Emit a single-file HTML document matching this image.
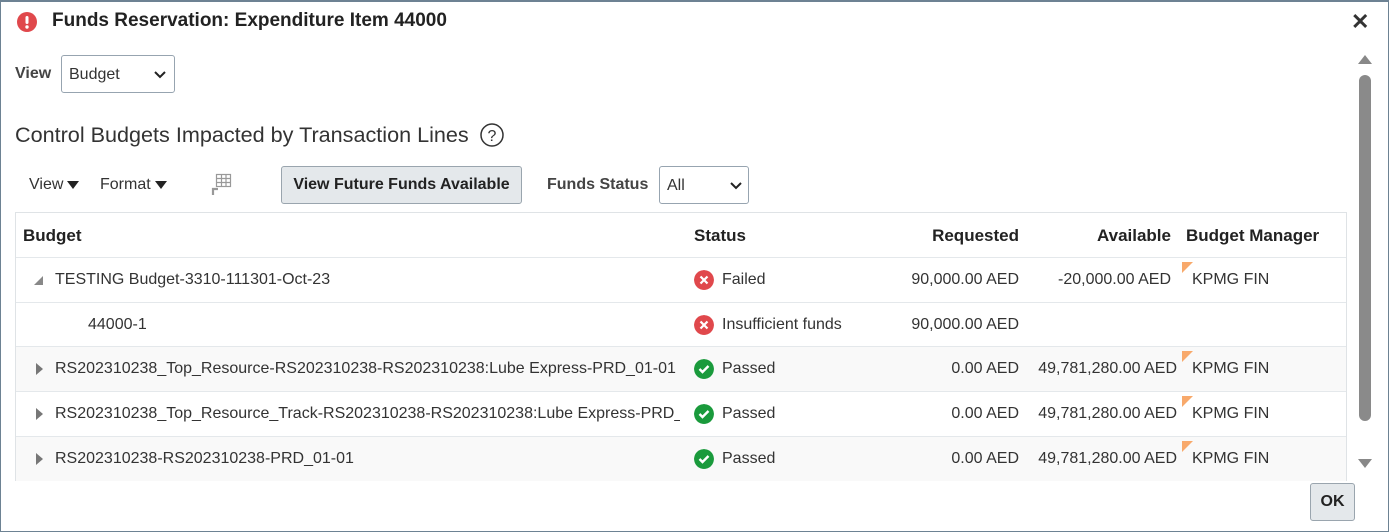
<!DOCTYPE html><html><head><style>
body{margin:0;width:1389px;height:531px;overflow:hidden;font-family:"Liberation Sans",sans-serif;color:#222;background:#fff;position:relative}
.a{position:absolute;white-space:nowrap}
.frame{position:absolute;left:0;top:0;width:1387px;height:529px;border:1px solid #6d8293;border-top:2px solid #6d8293}
.sel{position:absolute;border:1px solid #97a4b0;border-radius:3px;background:#fff;font-size:16px;color:#333}
.row{position:absolute;left:16px;width:1330px;height:44px;border-top:1px solid #e4e8eb;font-size:16px;color:#333}
.row span{position:absolute;top:13px;white-space:nowrap}
.r{text-align:right}
.ic{position:absolute;left:678px;top:12px;width:20px;height:20px;border-radius:50%}
.tri{position:absolute;left:1166px;top:4px;width:0;height:0;border-top:11px solid #f8a96b;border-right:11px solid transparent}
.arr{position:absolute;left:20px;top:16px;width:0;height:0;border-left:7px solid #777;border-top:6px solid transparent;border-bottom:6px solid transparent}
.dn{display:inline-block;width:0;height:0;border-top:8px solid #222;border-left:6px solid transparent;border-right:6px solid transparent;vertical-align:middle;margin-left:4px}
</style></head><body>
<div class="frame"></div>
<svg class="a" style="left:16px;top:11px" width="22" height="22"><circle cx="11" cy="11" r="10" fill="#e0484c"/><rect x="9.5" y="5" width="3" height="8" rx="1.5" fill="#fff"/><circle cx="11" cy="16" r="1.7" fill="#fff"/></svg>
<div class="a" style="left:52px;top:10px;font-size:19px;font-weight:bold;color:#222">Funds Reservation: Expenditure Item 44000</div>
<div class="a" style="left:1351px;top:9px;font-size:22px;font-weight:bold;color:#333">✕</div>
<div class="a" style="left:15px;top:65px;font-size:16px;font-weight:bold;color:#444">View</div>
<div class="sel" style="left:61px;top:55px;width:112px;height:36px"><span class="a" style="left:7px;top:10px">Budget</span><svg class="a" style="left:92px;top:15px" width="12" height="8"><path d="M1 1l5 5 5-5" stroke="#222" stroke-width="2" fill="none"/></svg></div>
<div class="a" style="left:15px;top:122px;font-size:21.6px;color:#333">Control Budgets Impacted by Transaction Lines</div>
<svg class="a" style="left:479px;top:122px" width="26" height="26"><circle cx="13" cy="13" r="11" fill="none" stroke="#333" stroke-width="1.5"/><text x="13" y="19" font-size="16" text-anchor="middle" fill="#333" font-family="Liberation Sans">?</text></svg>
<div class="a" style="left:29px;top:176px;font-size:16px;color:#333">View<span class="dn"></span></div>
<div class="a" style="left:100px;top:176px;font-size:16px;color:#333">Format<span class="dn"></span></div>
<svg class="a" style="left:208px;top:172px" width="26" height="26"><g fill="none" stroke="#999" stroke-width="1.2"><rect x="8.5" y="2.5" width="14" height="12"/><path d="M8.5 6.5h14M8.5 10.5h14M13.5 2.5v12M18 2.5v12"/><path d="M5 23v-6h5" stroke-width="2.2"/></g></svg>
<div class="a" style="left:281px;top:166px;width:239px;height:36px;border:1px solid #9aa5ae;border-radius:3px;background:#e4e8eb;font-size:16px;font-weight:bold;text-align:center;line-height:36px;color:#222">View Future Funds Available</div>
<div class="a" style="left:547px;top:176px;font-size:16px;font-weight:bold;color:#444">Funds Status</div>
<div class="sel" style="left:659px;top:166px;width:88px;height:36px"><span class="a" style="left:7px;top:10px">All</span><svg class="a" style="left:70px;top:15px" width="12" height="8"><path d="M1 1l5 5 5-5" stroke="#222" stroke-width="2" fill="none"/></svg></div>
<div class="a" style="left:15px;top:212px;width:1330px;height:268px;border:1px solid #dfe3e6;border-bottom:none"></div>
<div class="row" style="top:213px;border-top:none;font-weight:bold;color:#222;font-size:17px"><span style="left:7px">Budget</span><span style="left:678px">Status</span><span class="r" style="right:327px">Requested</span><span class="r" style="right:175px">Available</span><span style="left:1170px">Budget Manager</span></div>
<div class="row" style="top:257px"><div style="position:absolute;left:18px;top:18px;border-right:9px solid #888;border-top:9px solid transparent;width:0"></div><span style="left:39px">TESTING Budget-3310-111301-Oct-23</span><svg class="ic" width="20" height="20"><circle cx="10" cy="10" r="10" fill="#e0484c"/><path d="M6.5 6.5l7 7M13.5 6.5l-7 7" stroke="#fff" stroke-width="2.2"/></svg><span style="left:706px">Failed</span><span style="right:327px">90,000.00 AED</span><span style="right:175px">-20,000.00 AED</span><div class="tri"></div><span style="left:1176px">KPMG FIN</span></div>
<div class="row" style="top:302px"><span style="left:72px">44000-1</span><svg class="ic" width="20" height="20"><circle cx="10" cy="10" r="10" fill="#e0484c"/><path d="M6.5 6.5l7 7M13.5 6.5l-7 7" stroke="#fff" stroke-width="2.2"/></svg><span style="left:706px">Insufficient funds</span><span style="right:327px">90,000.00 AED</span></div>
<div class="row" style="top:346px;background:#f9f9f9"><div class="arr"></div><span style="left:39px;width:625px;overflow:hidden">RS202310238_Top_Resource-RS202310238-RS202310238:Lube Express-PRD_01-01</span><svg class="ic" width="20" height="20"><circle cx="10" cy="10" r="10" fill="#1a9a3c"/><path d="M5.5 10l3 3 6-6" stroke="#fff" stroke-width="2.4" fill="none"/></svg><span style="left:706px">Passed</span><span style="right:327px">0.00 AED</span><span style="right:169px">49,781,280.00 AED</span><div class="tri"></div><span style="left:1176px">KPMG FIN</span></div>
<div class="row" style="top:391px"><div class="arr"></div><span style="left:39px;width:625px;overflow:hidden">RS202310238_Top_Resource_Track-RS202310238-RS202310238:Lube Express-PRD_01-01</span><svg class="ic" width="20" height="20"><circle cx="10" cy="10" r="10" fill="#1a9a3c"/><path d="M5.5 10l3 3 6-6" stroke="#fff" stroke-width="2.4" fill="none"/></svg><span style="left:706px">Passed</span><span style="right:327px">0.00 AED</span><span style="right:169px">49,781,280.00 AED</span><div class="tri"></div><span style="left:1176px">KPMG FIN</span></div>
<div class="row" style="top:436px;background:#f9f9f9"><div class="arr"></div><span style="left:39px">RS202310238-RS202310238-PRD_01-01</span><svg class="ic" width="20" height="20"><circle cx="10" cy="10" r="10" fill="#1a9a3c"/><path d="M5.5 10l3 3 6-6" stroke="#fff" stroke-width="2.4" fill="none"/></svg><span style="left:706px">Passed</span><span style="right:327px">0.00 AED</span><span style="right:169px">49,781,280.00 AED</span><div class="tri"></div><span style="left:1176px">KPMG FIN</span></div>
<div class="a" style="left:1359px;top:75px;width:12px;height:346px;border-radius:6px;background:#8a8a8a"></div>
<div class="a" style="left:1358px;top:55px;border-bottom:9px solid #888;border-left:7px solid transparent;border-right:7px solid transparent"></div>
<div class="a" style="left:1358px;top:459px;border-top:9px solid #888;border-left:7px solid transparent;border-right:7px solid transparent"></div>
<div class="a" style="left:1310px;top:483px;width:43px;height:36px;border:1px solid #9aa5ae;border-radius:3px;background:#e4e8eb;font-size:16px;font-weight:bold;text-align:center;line-height:36px">OK</div>
</body></html>
